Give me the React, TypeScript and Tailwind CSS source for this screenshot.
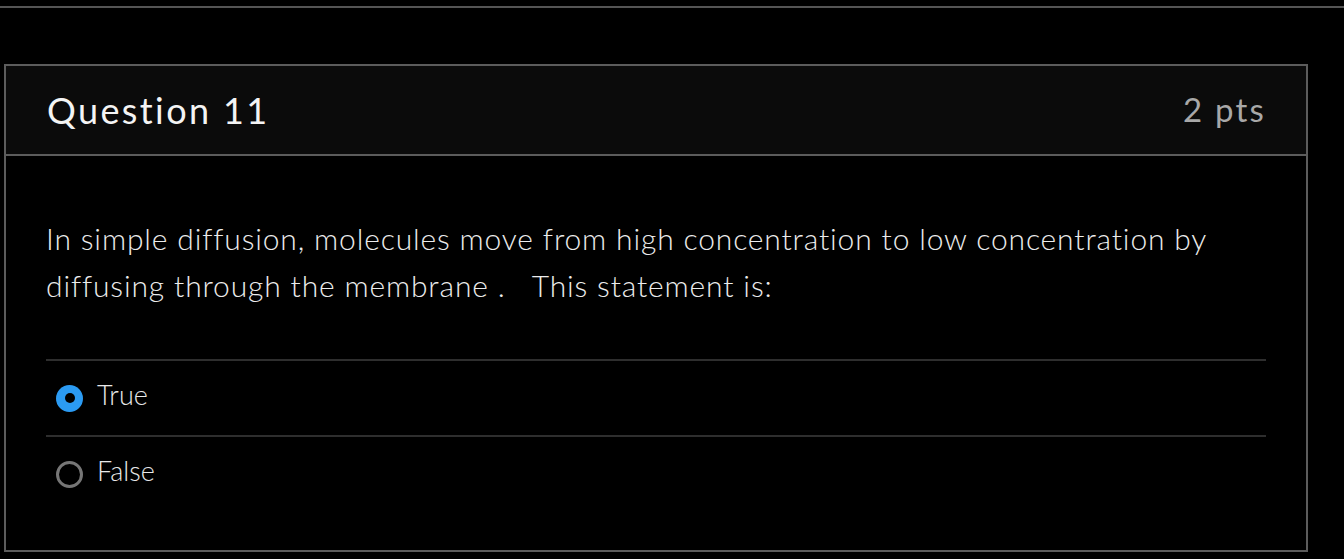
import React from "react"

function Radio({ checked }: { checked: boolean }) {
    return checked ? (
        <span className="w-[27px] h-[27px] rounded-full bg-[#2b9bf3] flex items-center justify-center shrink-0">
            <span className="w-[10px] h-[10px] rounded-full bg-black" />
        </span>
    ) : (
        <span className="w-[27px] h-[27px] rounded-full border-[3px] border-[#767676] shrink-0" />
    )
}

function Option({ label, checked }: { label: string, checked: boolean }) {
    return (
        <div className="h-[76px] border-t-2 border-[#2e2e2e] flex items-center pl-[10px] gap-[14px]">
            <Radio checked={checked} />
            <span className="text-[27px] font-light text-[#e8e8e8] -translate-y-[3px]">{label}</span>
        </div>
    )
}

export default function App() {
    return (
        <div className="min-h-[559px] bg-black font-['Lato','Liberation_Sans',sans-serif] pt-[6px]">
            <div className="h-[2px] bg-[#555]" />
            <div className="mt-[56px] ml-[4px] w-[1304px] border-2 border-[#5c5c5c]">
                <div className="h-[90px] bg-[#0b0b0b] border-b-2 border-[#5c5c5c] flex items-center justify-between pl-[41px] pr-[40px]">
                    <h2 className="text-[36px] tracking-[2.4px] text-[#f4f4f4]">Question 11</h2>
                    <span className="text-[33px] tracking-[2.2px] text-[#a8a8a8]">2 pts</span>
                </div>
                <div className="px-[40px] pt-[59px] pb-[39px]">
                    <p className="text-[30px] leading-[47px] tracking-[0.85px] font-light text-[#ececec]">
                        In simple diffusion, molecules move from high concentration to low concentration by diffusing through the membrane .&nbsp;&nbsp;&nbsp;This statement is:
                    </p>
                    <div className="mt-[50px]">
                        <Option label="True" checked={true} />
                        <Option label="False" checked={false} />
                    </div>
                </div>
            </div>
        </div>
    )
}
